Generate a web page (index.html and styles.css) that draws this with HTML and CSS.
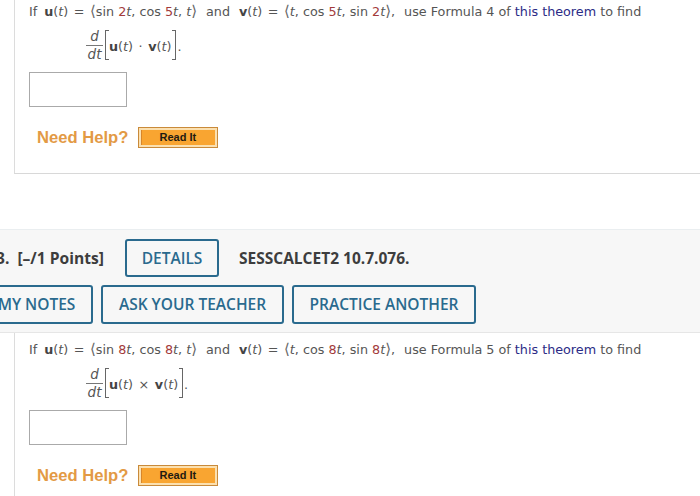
FILE: index.html
```html
<!DOCTYPE html>
<html lang="en">
<head>
<meta charset="utf-8">
<title>Question</title>
<link rel="stylesheet" href="styles.css">
</head>
<body>
<section class="card card-first">
  <p class="stem"><span class="w-if">If</span><b>u</b>(<i>t</i>)<span class="eq">=</span><span class="ang">⟨</span>sin <span class="num">2</span><i>t</i>, cos <span class="num">5</span><i>t</i>, <i>t</i><span class="ang">⟩</span><span class="sp">and</span><b class="sp">v</b>(<i>t</i>)<span class="eq">=</span><span class="ang">⟨</span><i>t</i>, cos <span class="num">5</span><i>t</i>, sin <span class="num">2</span><i>t</i><span class="ang">⟩</span>,<span class="sp">use Formula 4 of <a class="link">this theorem</a> to find</span></p>
  <div class="formula">
    <span class="frac"><i class="top">d</i><i class="bot">dt</i></span>
    <span class="br br-l"></span>
    <span class="expr"><b>u</b>(<i>t</i>) · <b>v</b>(<i>t</i>)</span>
    <span class="br br-r"></span>
    <span class="dot">.</span>
  </div>
  <div class="answer"></div>
  <div class="help">
    <span class="need">Need Help?</span>
    <span class="read"><span class="read-in">Read It</span></span>
  </div>
</section>
<header class="qhead">
  <div class="row row-top">
    <span class="pts"><span class="qnum">3.</span>[–/1 Points]</span>
    <span class="btn btn-details">DETAILS</span>
    <span class="code">SESSCALCET2 10.7.076.</span>
  </div>
  <div class="row row-btns">
    <span class="btn btn-notes">MY NOTES</span>
    <span class="btn btn-ask">ASK YOUR TEACHER</span>
    <span class="btn btn-practice">PRACTICE ANOTHER</span>
  </div>
</header>
<section class="card card-second">
  <p class="stem"><span class="w-if">If</span><b>u</b>(<i>t</i>)<span class="eq">=</span><span class="ang">⟨</span>sin <span class="num">8</span><i>t</i>, cos <span class="num">8</span><i>t</i>, <i>t</i><span class="ang">⟩</span><span class="sp">and</span><b class="sp">v</b>(<i>t</i>)<span class="eq">=</span><span class="ang">⟨</span><i>t</i>, cos <span class="num">8</span><i>t</i>, sin <span class="num">8</span><i>t</i><span class="ang">⟩</span>,<span class="sp">use Formula 5 of <a class="link">this theorem</a> to find</span></p>
  <div class="formula">
    <span class="frac"><i class="top">d</i><i class="bot">dt</i></span>
    <span class="br br-l"></span>
    <span class="expr"><b>u</b>(<i>t</i>) × <b>v</b>(<i>t</i>)</span>
    <span class="br br-r"></span>
    <span class="dot">.</span>
  </div>
  <div class="answer"></div>
  <div class="help">
    <span class="need">Need Help?</span>
    <span class="read"><span class="read-in">Read It</span></span>
  </div>
</section>
</body>
</html>
```
FILE: styles.css
```css
html, body { margin: 0; padding: 0; background: #fff; }
body { width: 700px; height: 496px; overflow: hidden; font-family: "DejaVu Sans", Verdana, sans-serif; color: #555; }

.card { margin-left: 14px; border-left: 1px solid #dcdcdc; padding-left: 14px; }
.card-first { height: 174px; border-bottom: 1px solid #d8d8d8; box-sizing: border-box; padding-top: 3px; }
.card-second { height: 163px; padding-top: 8px; }

.stem { margin: 0; font-size: 12.75px; line-height: 17px; white-space: nowrap; color: #555; }
.stem b { color: #444; }
.stem i { font-style: italic; }
.w-if { margin-right: 7px; }
.eq { margin: 0 5.5px; }
.num { color: #a33a3a; }
.ang { font-size: 15px; color: #666; }
.sp { margin-left: 9px; }
.link { color: #2b2b86; }

.formula { display: flex; align-items: center; margin: 8px 0 0 57px; height: 34px; font-size: 12.75px; }
.frac { display: flex; flex-direction: column; align-items: center; width: 17px; font-size: 13.5px; line-height: 17px; }
.frac .top { border-bottom: 1px solid #777; width: 100%; text-align: center; }
.br { width: 3px; height: 28px; border: 1px solid #666; }
.br-l { border-right: 0; margin-left: 2px; }
.br-r { border-left: 0; }
.expr { padding: 2px 1px 0 0; white-space: nowrap; word-spacing: 1.5px; }
.expr b { color: #444; }
.dot { margin: 2px 0 0 1px; }

.answer { width: 96px; height: 33px; margin-top: 10px; border: 1px solid #aaa; }

.help { display: flex; align-items: center; margin: 20px 0 0 8px; gap: 10px; }
.need { font-family: "Liberation Sans", Arial, sans-serif; font-weight: 700; font-size: 16.6px; color: #e39a45; }
.read { display: block; width: 80px; height: 21px; box-sizing: border-box; border: 1px solid #c98a3a; padding: 2px; background: #fbe0b0; }
.read-in { display: block; height: 15px; padding-right: 2px; background: #f9a531; border-left: 1px solid #d8862a; font-family: "Liberation Sans", Arial, sans-serif; font-weight: 700; font-size: 11px; line-height: 15px; text-align: center; color: #1f1a12; }

.qhead { margin-top: 55px; height: 104px; box-sizing: border-box; background: #f7f7f7; border-top: 1px solid #eaeef0; border-bottom: 1px solid #e6e6e6; padding-top: 9px; font-family: "Open Sans", sans-serif; font-size: 15.5px; font-weight: 600; }
.row { display: flex; align-items: center; white-space: nowrap; }
.row-btns { margin: 8px 0 0 -23px; gap: 8px; }
.row-top { margin-left: -4px; }
.pts { color: #3d3d3d; width: 109px; font-weight: 700; font-size: 15.6px; }
.qnum { margin-right: 8px; }
.btn { display: block; box-sizing: border-box; height: 39px; line-height: 35px; border: 2px solid #2a6a8e; border-radius: 3px; text-align: center; color: #2a6a8e; }
.btn-details { width: 94px; height: 38px; line-height: 34px; margin-left: 20px; }
.code { margin-left: 20px; color: #3d3d3d; font-weight: 700; font-size: 15.5px; }
.btn-notes { width: 116px; padding-left: 3px; }
.btn-ask { width: 183px; }
.btn-practice { width: 184px; }
```
